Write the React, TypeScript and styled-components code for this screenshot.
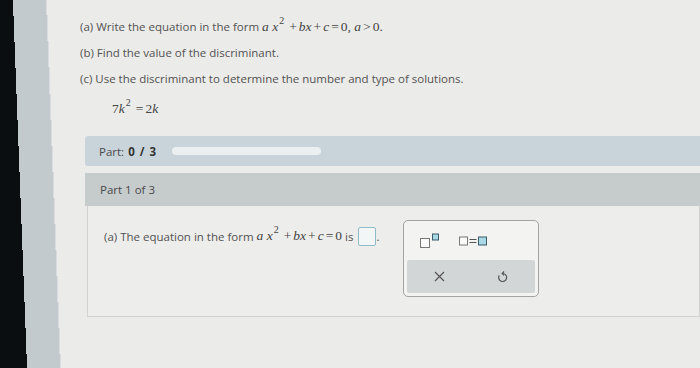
import React from 'react';
import styled, { createGlobalStyle } from 'styled-components';

const GlobalStyle = createGlobalStyle`
  html, body {
    margin: 0;
    padding: 0;
    background: #ebebe9;
  }
  body {
    font-family: "Open Sans", "DejaVu Sans", sans-serif;
  }
`;

const Screen = styled.div`
  display: flex;
  width: 700px;
  height: 368px;
  overflow: hidden;
  background: #ebebe9;
`;

// photographed monitor edge: dark bezel + pale side strip, slightly slanted
const Bezel = styled.div`
  flex: 0 0 64px;
  background: linear-gradient(87.8deg, #0a0e11 0 27px, #c2cace 27px 60px, #d9dddf 60px 61px, #ebebe9 61px);
`;

const Main = styled.div`
  flex: 1;
  display: flex;
  flex-direction: column;
  padding: 14px 0 0 16px;
  min-width: 0;
`;

const Line = styled.div<{ $indent?: number }>`
  height: 26px;
  line-height: 26px;
  font-size: 11.5px;
  color: #525252;
  padding-left: ${p => p.$indent || 0}px;
  white-space: nowrap;
`;

const MathText = styled.span`
  font-family: "Liberation Serif", "Times New Roman", serif;
  font-size: 13.5px;
  color: #444;
`;

const V = styled.i`
  font-style: italic;
`;

const Op = styled.span`
  margin: 0 2px;
`;

const Sup = styled.span`
  font-size: 10px;
  position: relative;
  top: -7px;
  vertical-align: baseline;
  line-height: 0;
  margin: 0 3px 0 1px;
`;

const PartBar = styled.div`
  margin: 14px 0 0 5px;
  height: 30px;
  background: #c9d3da;
  border-radius: 3px 0 0 3px;
  display: flex;
  align-items: center;
  padding-left: 14px;
  font-size: 11.5px;
  color: #4a4a4a;
`;

const PartCount = styled.b`
  font-weight: 700;
  margin-left: 4px;
  color: #333;
  word-spacing: 2px;
`;

const Track = styled.div`
  margin-left: 16px;
  width: 149px;
  height: 8px;
  border-radius: 4px;
  background: #eceff0;
`;

const PartHeader = styled.div`
  margin: 7px 0 0 5px;
  height: 33px;
  background: #c6cccc;
  display: flex;
  align-items: center;
  padding-left: 15px;
  font-size: 11.5px;
  color: #4a4a4a;
`;

const Panel = styled.div`
  margin-left: 7px;
  height: 111px;
  box-sizing: border-box;
  border: 1px solid #d2d2d0;
  border-top: none;
  background: #ededeb;
  display: flex;
  align-items: flex-start;
  padding: 14px 0 0 16px;
`;

const Prompt = styled.div`
  margin-top: 6px;
  height: 20px;
  font-size: 11.5px;
  color: #525252;
  white-space: nowrap;
  display: flex;
  align-items: center;
`;

const AnswerBox = styled.span`
  display: inline-block;
  width: 16px;
  height: 17px;
  margin-left: 5px;
  border: 1px solid #8fbccb;
  border-radius: 2px;
  background: #f3f6f6;
`;

const Keypad = styled.div`
  margin-left: 24px;
  width: 136px;
  height: 77px;
  box-sizing: border-box;
  border: 1px solid #a3a3a3;
  border-radius: 5px;
  background: #f3f3f2;
  padding: 0 3px 3px;
  display: flex;
  flex-direction: column;
`;

const IconRow = styled.div`
  height: 39px;
  display: flex;
  align-items: center;
  padding-left: 12px;
  gap: 18px;
`;

const ActionRow = styled.div`
  flex: 1;
  display: flex;
  background: #d3d6d7;
  border-radius: 2px;
`;

const ActionButton = styled.div`
  flex: 1;
  display: flex;
  align-items: center;
  justify-content: center;
  color: #555;
`;

const Superscript = () => (
  <svg width="22" height="16" viewBox="0 0 22 16">
    <rect x="1.5" y="5.5" width="9" height="9" fill="#fafafa" stroke="#777" />
    <rect x="13.5" y="1" width="6" height="6" fill="#a9d9e6" stroke="#3a5a66" />
  </svg>
);

const Equals = () => (
  <svg width="28" height="10" viewBox="0 0 28 10">
    <rect x="0.5" y="1" width="8" height="8" fill="#fafafa" stroke="#777" />
    <line x1="10.5" y1="3.5" x2="17.5" y2="3.5" stroke="#555" />
    <line x1="10.5" y1="6.5" x2="17.5" y2="6.5" stroke="#555" />
    <rect x="19.5" y="1" width="8" height="8" fill="#a9d9e6" stroke="#3a5a66" />
  </svg>
);

const Cross = () => (
  <svg width="11" height="11" viewBox="0 0 11 11">
    <path d="M1 1 L10 10 M10 1 L1 10" stroke="#555" strokeWidth="1.2" />
  </svg>
);

const Undo = () => (
  <svg width="12" height="13" viewBox="0 0 12 13">
    <path d="M5.5 3.5 A4 4 0 1 1 2.3 5.3" fill="none" stroke="#555" strokeWidth="1.2" />
    <path d="M7 1.5 L5.2 3.5 L7 5.3" fill="none" stroke="#555" strokeWidth="1.2" />
  </svg>
);

const Quadratic = () => (
  <>
    <V>a</V> <V>x</V><Sup>2</Sup><Op>+</Op><V>bx</V><Op>+</Op><V>c</V><Op>=</Op>0
  </>
);

const App = () => {
  return (
    <>
      <GlobalStyle />
      <Screen>
        <Bezel />
        <Main>
          <Line>
            (a) Write the equation in the form{' '}
            <MathText>
              <Quadratic />, <V>a</V><Op>&gt;</Op>0.
            </MathText>
          </Line>
          <Line>(b) Find the value of the discriminant.</Line>
          <Line>(c) Use the discriminant to determine the number and type of solutions.</Line>
          <Line $indent={32} style={{ marginTop: 4 }}>
            <MathText>
              7<V>k</V><Sup>2</Sup><Op>=</Op>2<V>k</V>
            </MathText>
          </Line>

          <PartBar>
            Part: <PartCount>0 / 3</PartCount>
            <Track />
          </PartBar>

          <PartHeader>Part 1 of 3</PartHeader>

          <Panel>
            <Prompt>
              (a) The equation in the form&nbsp;
              <MathText>
                <Quadratic />
              </MathText>
              &nbsp;is
              <AnswerBox />.
            </Prompt>
            <Keypad>
              <IconRow>
                <Superscript />
                <Equals />
              </IconRow>
              <ActionRow>
                <ActionButton><Cross /></ActionButton>
                <ActionButton><Undo /></ActionButton>
              </ActionRow>
            </Keypad>
          </Panel>
        </Main>
      </Screen>
    </>
  );
};

export default App;
